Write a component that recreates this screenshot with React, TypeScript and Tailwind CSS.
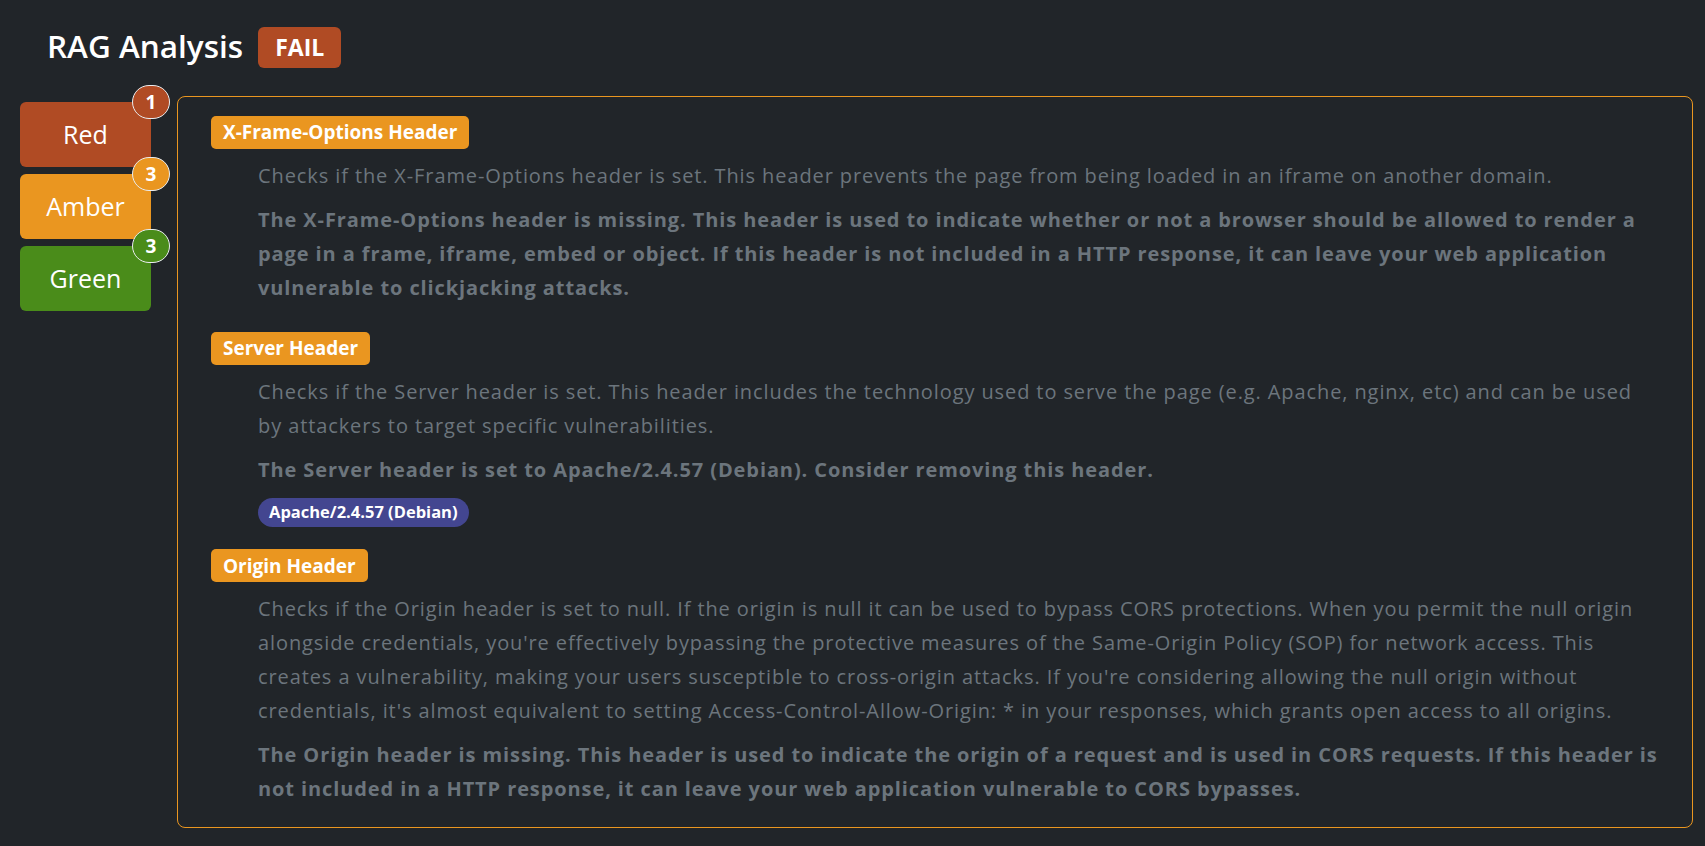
type Rag = { label: string; count: number; bg: string };

const ragButtons: Rag[] = [
  { label: "Red", count: 1, bg: "bg-[#b04b24]" },
  { label: "Amber", count: 3, bg: "bg-[#ea9620]" },
  { label: "Green", count: 3, bg: "bg-[#4a8c1a]" },
];

function RagButton({ item }: { item: Rag }) {
  return (
    <div className={`relative flex h-[65px] w-[131px] items-center justify-center rounded-[6px] ${item.bg} text-[25px] text-white`}>
      {item.label}
      <span
        className={`absolute right-0 top-0 flex h-[34px] min-w-[38px] -translate-y-1/2 translate-x-1/2 items-center justify-center rounded-full border border-[#e9ecef] ${item.bg} text-[19px] font-bold leading-none text-white`}
      >
        {item.count}
      </span>
    </div>
  );
}

function Section({
  title,
  description,
  result,
  value,
  className,
}: {
  title: string;
  description: string;
  result: string;
  value?: string;
  className?: string;
}) {
  return (
    <section className={className}>
      <span className="inline-flex h-[33px] items-center rounded-[5px] bg-[#ea9620] px-[12px] text-[19px] font-bold text-white">
        {title}
      </span>
      <div className="ml-[47px] text-[20px] leading-[34px] tracking-[0.9px] text-[#6c757d]">
        <p className="mt-[10px]">{description}</p>
        <p className="mt-[10px] font-bold">{result}</p>
        {value ? (
          <span className="mt-[11px] inline-flex h-[29px] items-center rounded-full bg-[#434690] px-[11px] text-[16.5px] font-bold leading-none tracking-normal text-white">
            {value}
          </span>
        ) : null}
      </div>
    </section>
  );
}

export default function App() {
  return (
    <div className="min-h-screen bg-[#212529] pl-[20px] pt-[27px] font-['Open_Sans',sans-serif]">
      <div className="flex h-[41px] items-center gap-[15px] pl-[27px]">
        <h1 className="-mt-[3px] text-[31.5px] font-semibold leading-none text-white">RAG Analysis</h1>
        <span className="flex h-[41px] items-center rounded-[6px] bg-[#b04b24] px-[17px] text-[23px] font-bold text-white">
          FAIL
        </span>
      </div>

      <div className="mt-[28px] flex items-start gap-[26px]">
        <div className="mt-[6px] flex flex-col gap-[7px]">
          {ragButtons.map((item) => (
            <RagButton key={item.label} item={item} />
          ))}
        </div>

        <div className="mr-[12px] flex-1 rounded-[8px] border border-[#ea9620] px-[33px] pb-[21px] pt-[19px]">
          <Section
            className="mb-[27px]"
            title="X-Frame-Options Header"
            description="Checks if the X-Frame-Options header is set. This header prevents the page from being loaded in an iframe on another domain."
            result="The X-Frame-Options header is missing. This header is used to indicate whether or not a browser should be allowed to render a page in a frame, iframe, embed or object. If this header is not included in a HTTP response, it can leave your web application vulnerable to clickjacking attacks."
          />
          <Section
            className="mb-[21px]"
            title="Server Header"
            description="Checks if the Server header is set. This header includes the technology used to serve the page (e.g. Apache, nginx, etc) and can be used by attackers to target specific vulnerabilities."
            result="The Server header is set to Apache/2.4.57 (Debian). Consider removing this header."
            value="Apache/2.4.57 (Debian)"
          />
          <Section
            title="Origin Header"
            description="Checks if the Origin header is set to null. If the origin is null it can be used to bypass CORS protections. When you permit the null origin alongside credentials, you're effectively bypassing the protective measures of the Same-Origin Policy (SOP) for network access. This creates a vulnerability, making your users susceptible to cross-origin attacks. If you're considering allowing the null origin without credentials, it's almost equivalent to setting Access-Control-Allow-Origin: * in your responses, which grants open access to all origins."
            result="The Origin header is missing. This header is used to indicate the origin of a request and is used in CORS requests. If this header is not included in a HTTP response, it can leave your web application vulnerable to CORS bypasses."
          />
        </div>
      </div>
    </div>
  );
}
